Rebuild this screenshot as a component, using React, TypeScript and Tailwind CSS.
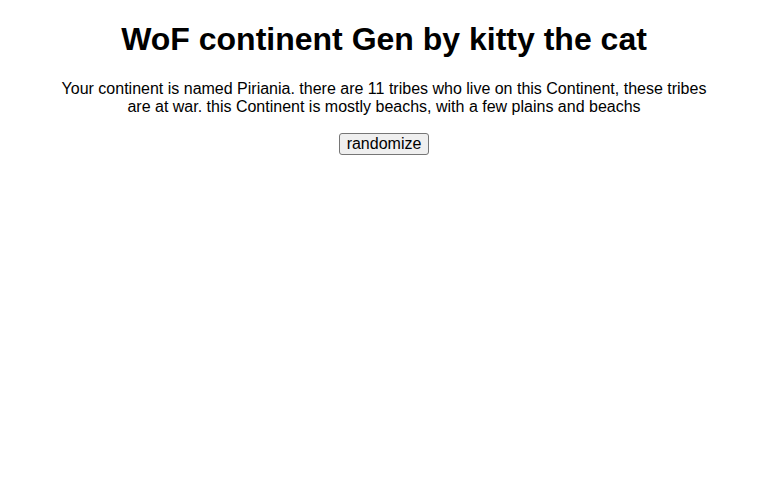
import React, { useState } from "react";

const lands = ["beachs", "plains", "mountains", "forests", "deserts", "jungles"];

const App: React.FC = () => {
  const [name] = useState("Piriania");
  const [tribes] = useState(11);
  const [main, setMain] = useState(lands[0]);

  const randomize = () => {
    setMain(lands[Math.floor(Math.random() * lands.length)]);
  };

  return (
    <div className="text-center text-black bg-white min-h-[480px] font-['Liberation_Sans',Arial,sans-serif]">
      <h1 className="pt-[21px] text-[32px] font-bold leading-[37px]">
        WoF continent Gen by kitty the cat
      </h1>
      <p className="mt-[22px] text-base leading-[18px] px-[56px]">
        Your continent is named {name}. there are {tribes} tribes who live on this Continent, these tribes
        are at war. this Continent is mostly {main}, with a few plains and beachs
      </p>
      <div className="mt-[16px]">
        <button
          onClick={randomize}
          className="text-base leading-[18px] px-[7px] py-[1px] border border-[#767676] rounded-[3px] bg-[#efefef] text-black"
        >
          randomize
        </button>
      </div>
    </div>
  );
};

export default App;
